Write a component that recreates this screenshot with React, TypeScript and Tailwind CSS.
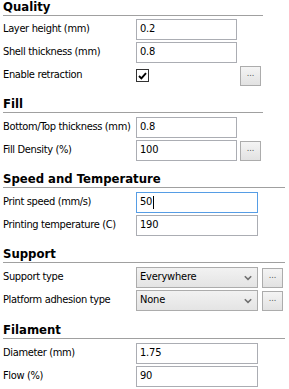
import type { ReactNode } from "react";

const FONT = { fontFamily: '"DejaVu Sans Condensed", "Liberation Sans", Arial, sans-serif' };

function Header({ title, wide, extra }: { title: string; wide?: boolean; extra?: boolean }) {
  return (
    <div
      className={
        "ml-[3px] h-[16px] border-b border-[#a0a0a0] text-[13px] font-bold leading-[14px] text-black " +
        (extra ? "mt-[12px] " : "mt-[11px] ") +
        (wide ? "w-[282px]" : "w-[260px]")
      }
    >
      {title}
    </div>
  );
}

function Row({ label, children }: { label: string; children: ReactNode }) {
  return (
    <div className="flex h-[21px] items-center">
      <div className="w-[136px] shrink-0 whitespace-nowrap pl-[3px] text-[11px] tracking-[-0.35px] text-black">
        {label}
      </div>
      {children}
    </div>
  );
}

function TextBox({
  value,
  wide,
  focused,
}: {
  value: string;
  wide?: boolean;
  focused?: boolean;
}) {
  return (
    <div
      className={
        "flex h-[21px] items-center border bg-white px-[3px] text-[11px] tracking-[-0.2px] text-black " +
        (wide ? "w-[122px] " : "w-[101px] ") +
        (focused ? "border-[#569de5]" : "border-[#abadb3]")
      }
    >
      {value}
      {focused && <span className="ml-px inline-block h-[13px] w-px bg-black" />}
    </div>
  );
}

function DotsButton({ className = "" }: { className?: string }) {
  return (
    <div
      className={
        "flex h-[20px] w-[21px] items-center justify-center border border-[#acacac] bg-gradient-to-b from-[#f4f4f4] to-[#e2e2e2] pb-[3px] text-[9px] text-[#555] " +
        className
      }
    >
      ...
    </div>
  );
}

function Select({ value }: { value: string }) {
  return (
    <div className="flex h-[21px] w-[122px] items-center justify-between border border-[#acacac] bg-gradient-to-b from-[#f2f2f2] to-[#e4e4e4] pl-[3px] pr-[5px] text-[11px] tracking-[-0.2px] text-black">
      <span>{value}</span>
      <svg width="8" height="6" viewBox="0 0 8 6">
        <path d="M0.8 1.2 L4 4.4 L7.2 1.2" fill="none" stroke="#707070" strokeWidth="1.6" />
      </svg>
    </div>
  );
}

export default function App() {
  return (
    <div className="h-[389px] w-[289px] overflow-hidden bg-white" style={FONT}>
      <div className="-mt-[11px]">
        <Header title="Quality" />
      </div>
      <div className="mt-[3px] flex flex-col gap-[2px]">
        <Row label="Layer height (mm)">
          <TextBox value="0.2" />
        </Row>
        <Row label="Shell thickness (mm)">
          <TextBox value="0.8" />
        </Row>
        <Row label="Enable retraction">
          <div className="flex w-[101px] items-center">
            <div className="flex h-[13px] w-[13px] items-center justify-center border border-[#333] bg-white">
              <svg width="9" height="8" viewBox="0 0 9 8">
                <path d="M1 4 L3.4 6.4 L8 1.2" fill="none" stroke="#000" strokeWidth="1.9" />
              </svg>
            </div>
          </div>
          <DotsButton className="ml-[3px]" />
        </Row>
      </div>

      <Header title="Fill" />
      <div className="mt-[4px] flex flex-col gap-[2px]">
        <Row label="Bottom/Top thickness (mm)">
          <TextBox value="0.8" />
        </Row>
        <Row label="Fill Density (%)">
          <TextBox value="100" />
          <DotsButton className="ml-[3px]" />
        </Row>
      </div>

      <Header title="Speed and Temperature" wide />
      <div className="mt-[4px] flex flex-col gap-[2px]">
        <Row label="Print speed (mm/s)">
          <TextBox value="50" wide focused />
        </Row>
        <Row label="Printing temperature (C)">
          <TextBox value="190" wide />
        </Row>
      </div>

      <Header title="Support" wide />
      <div className="mt-[4px] flex flex-col gap-[2px]">
        <Row label="Support type">
          <Select value="Everywhere" />
          <DotsButton className="ml-[4px]" />
        </Row>
        <Row label="Platform adhesion type">
          <Select value="None" />
          <DotsButton className="ml-[4px]" />
        </Row>
      </div>

      <Header title="Filament" wide extra />
      <div className="mt-[4px] flex flex-col gap-[2px]">
        <Row label="Diameter (mm)">
          <TextBox value="1.75" wide />
        </Row>
        <Row label="Flow (%)">
          <TextBox value="90" wide />
        </Row>
      </div>
    </div>
  );
}
